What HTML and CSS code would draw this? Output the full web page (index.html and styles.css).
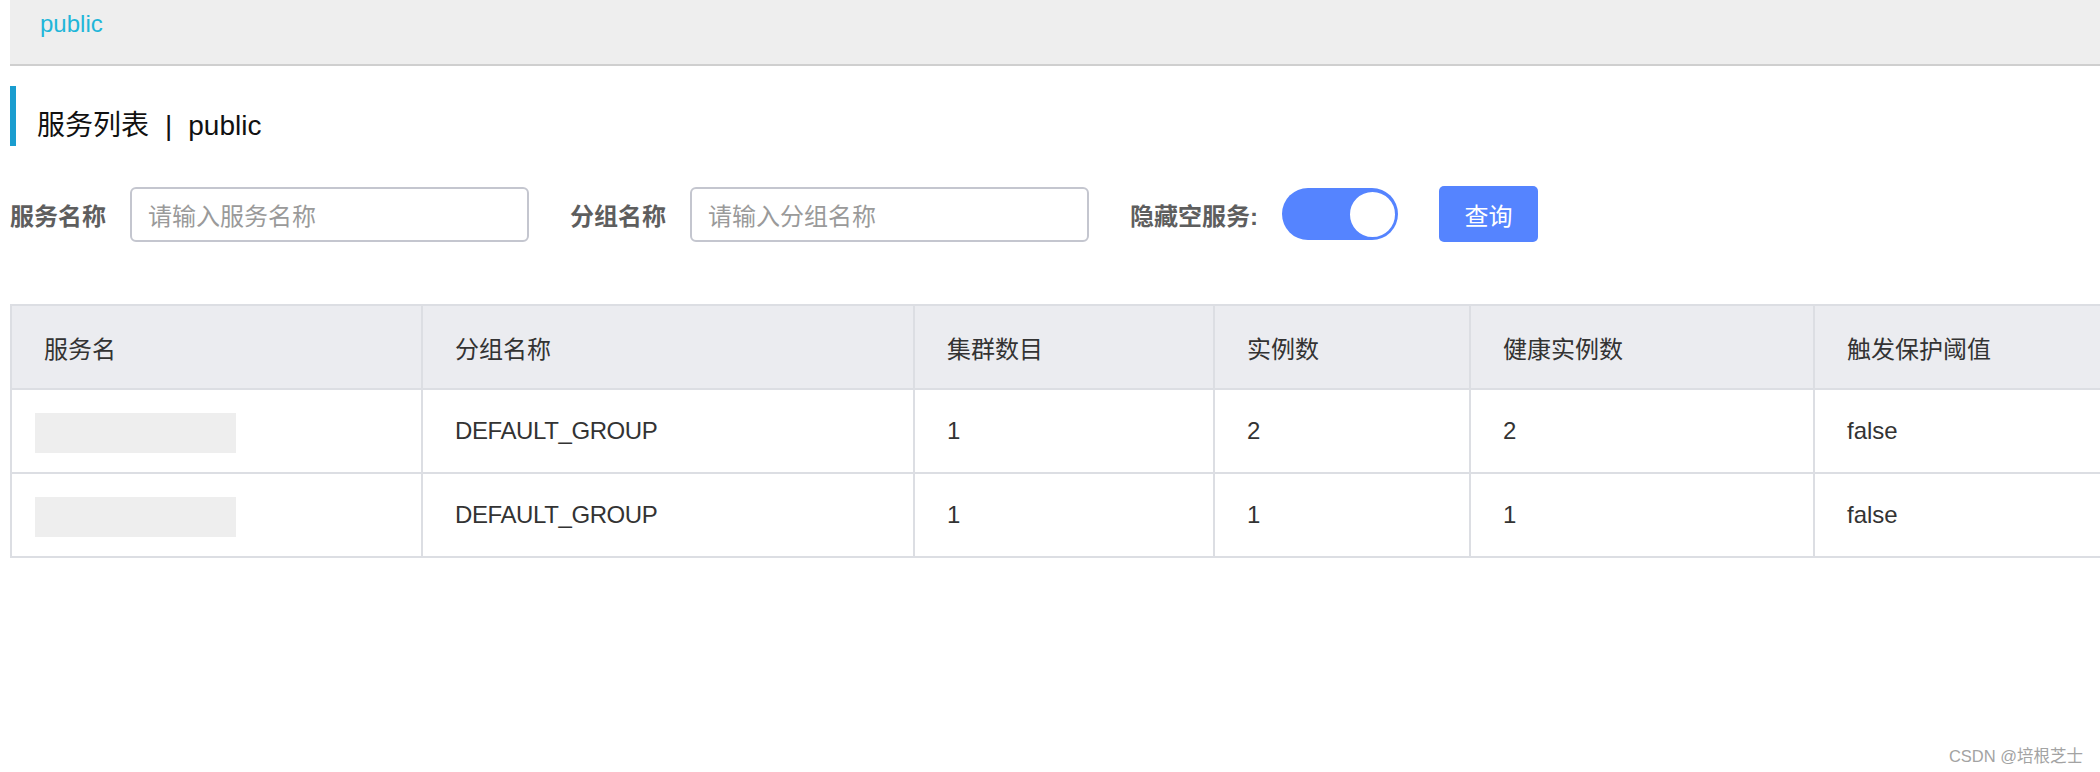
FILE: index.html
```html
<!DOCTYPE html>
<html lang="zh-CN">
<head>
<meta charset="utf-8">
<title>服务列表</title>
<link rel="stylesheet" href="styles.css">
</head>
<body>
<div class="page">
  <div class="topbar"><span class="ns-link">public</span></div>

  <div class="title">
    <span>服务列表</span><span class="sep">|</span><span>public</span>
  </div>

  <div class="filters">
    <div class="item">
      <label class="lbl">服务名称</label>
      <div class="input"><span class="ph">请输入服务名称</span></div>
    </div>
    <div class="item">
      <label class="lbl">分组名称</label>
      <div class="input"><span class="ph">请输入分组名称</span></div>
    </div>
    <div class="item">
      <label class="lbl">隐藏空服务:</label>
      <div class="switch"><span class="knob"></span></div>
    </div>
    <div class="item">
      <button class="btn">查询</button>
    </div>
  </div>

  <div class="table-wrap">
    <table class="grid">
      <colgroup>
        <col class="c1"><col class="c2"><col class="c3"><col class="c4"><col class="c5"><col class="c6">
      </colgroup>
      <thead>
        <tr><th>服务名</th><th>分组名称</th><th>集群数目</th><th>实例数</th><th>健康实例数</th><th>触发保护阈值</th></tr>
      </thead>
      <tbody>
        <tr><td><span class="mask"></span></td><td class="latin">DEFAULT_GROUP</td><td>1</td><td>2</td><td>2</td><td>false</td></tr>
        <tr><td><span class="mask"></span></td><td class="latin">DEFAULT_GROUP</td><td>1</td><td>1</td><td>1</td><td>false</td></tr>
      </tbody>
    </table>
  </div>
</div>
<div class="watermark">CSDN @培根芝士</div>
</body>
</html>
```

FILE: styles.css
```css
html, body {
  margin: 0;
  padding: 0;
  background: #fff;
  overflow: hidden;
  width: 2100px;
  height: 772px;
}
body {
  font-family: "Liberation Sans", "Noto Sans CJK SC", sans-serif;
  color: #333;
  position: relative;
}
.page {
  padding-left: 10px;
}
.topbar {
  height: 66px;
  box-sizing: border-box;
  background: #eeeeee;
  border-bottom: 2px solid #cfcfcf;
  padding-left: 30px;
  line-height: 48px;
  font-size: 24px;
}
.ns-link {
  color: #1fb6d9;
}
.title {
  margin-top: 20px;
  height: 60px;
  box-sizing: border-box;
  border-left: 6px solid #1a9dcf;
  padding-left: 21px;
  padding-top: 20px;
  line-height: 40px;
  font-size: 28px;
  color: #111;
  white-space: nowrap;
}
.sep {
  margin: 0 16px;
}
.filters {
  margin-top: 40px;
  display: flex;
  align-items: center;
  height: 56px;
}
.item {
  display: flex;
  align-items: center;
  margin-right: 41px;
}
.lbl {
  font-size: 24px;
  font-weight: bold;
  color: #5e5e5e;
  margin-right: 24px;
  white-space: nowrap;
}
.input {
  width: 399px;
  height: 55px;
  box-sizing: border-box;
  border: 2px solid #c4c6cf;
  border-radius: 6px;
  padding-left: 16px;
  display: flex;
  align-items: center;
  background: #fff;
}
.ph {
  font-size: 24px;
  color: #9a9a9a;
}
.switch {
  width: 116px;
  height: 52px;
  box-sizing: border-box;
  border-radius: 26px;
  background: #5584ff;
  display: flex;
  justify-content: flex-end;
  align-items: center;
  padding: 0 1px;
}
.knob {
  width: 49px;
  height: 49px;
  box-sizing: border-box;
  border-radius: 50%;
  background: #fff;
  border: 2px solid #5584ff;
}
.btn {
  width: 99px;
  height: 56px;
  border: none;
  border-radius: 5px;
  background: #5584ff;
  color: #fff;
  font-family: "Liberation Sans", "Noto Sans CJK SC", sans-serif;
  font-size: 24px;
  padding: 0;
}
.table-wrap {
  margin-top: 62px;
  overflow: hidden;
}
.grid {
  border-collapse: collapse;
  table-layout: fixed;
  width: 2300px;
  border: 2px solid #dcdee3;
  font-size: 24px;
}
.c1 { width: 411px; }
.c2 { width: 492px; }
.c3 { width: 300px; }
.c4 { width: 256px; }
.c5 { width: 344px; }
.c6 { width: 497px; }
.grid th, .grid td {
  border: 2px solid #dcdee3;
  height: 82px;
  padding: 0 0 0 32px;
  text-align: left;
  vertical-align: middle;
  color: #333;
  white-space: nowrap;
}
.grid th {
  background: #ebecf0;
  font-weight: normal;
}
.grid td.latin {
  letter-spacing: -0.4px;
}
.mask {
  display: block;
  width: 201px;
  height: 40px;
  margin-left: -9px;
  margin-top: 4px;
  background: #eeeeee;
}
.watermark {
  position: absolute;
  right: 17px;
  top: 743px;
  font-size: 16.5px;
  color: #a3a3a3;
  white-space: nowrap;
}
```
